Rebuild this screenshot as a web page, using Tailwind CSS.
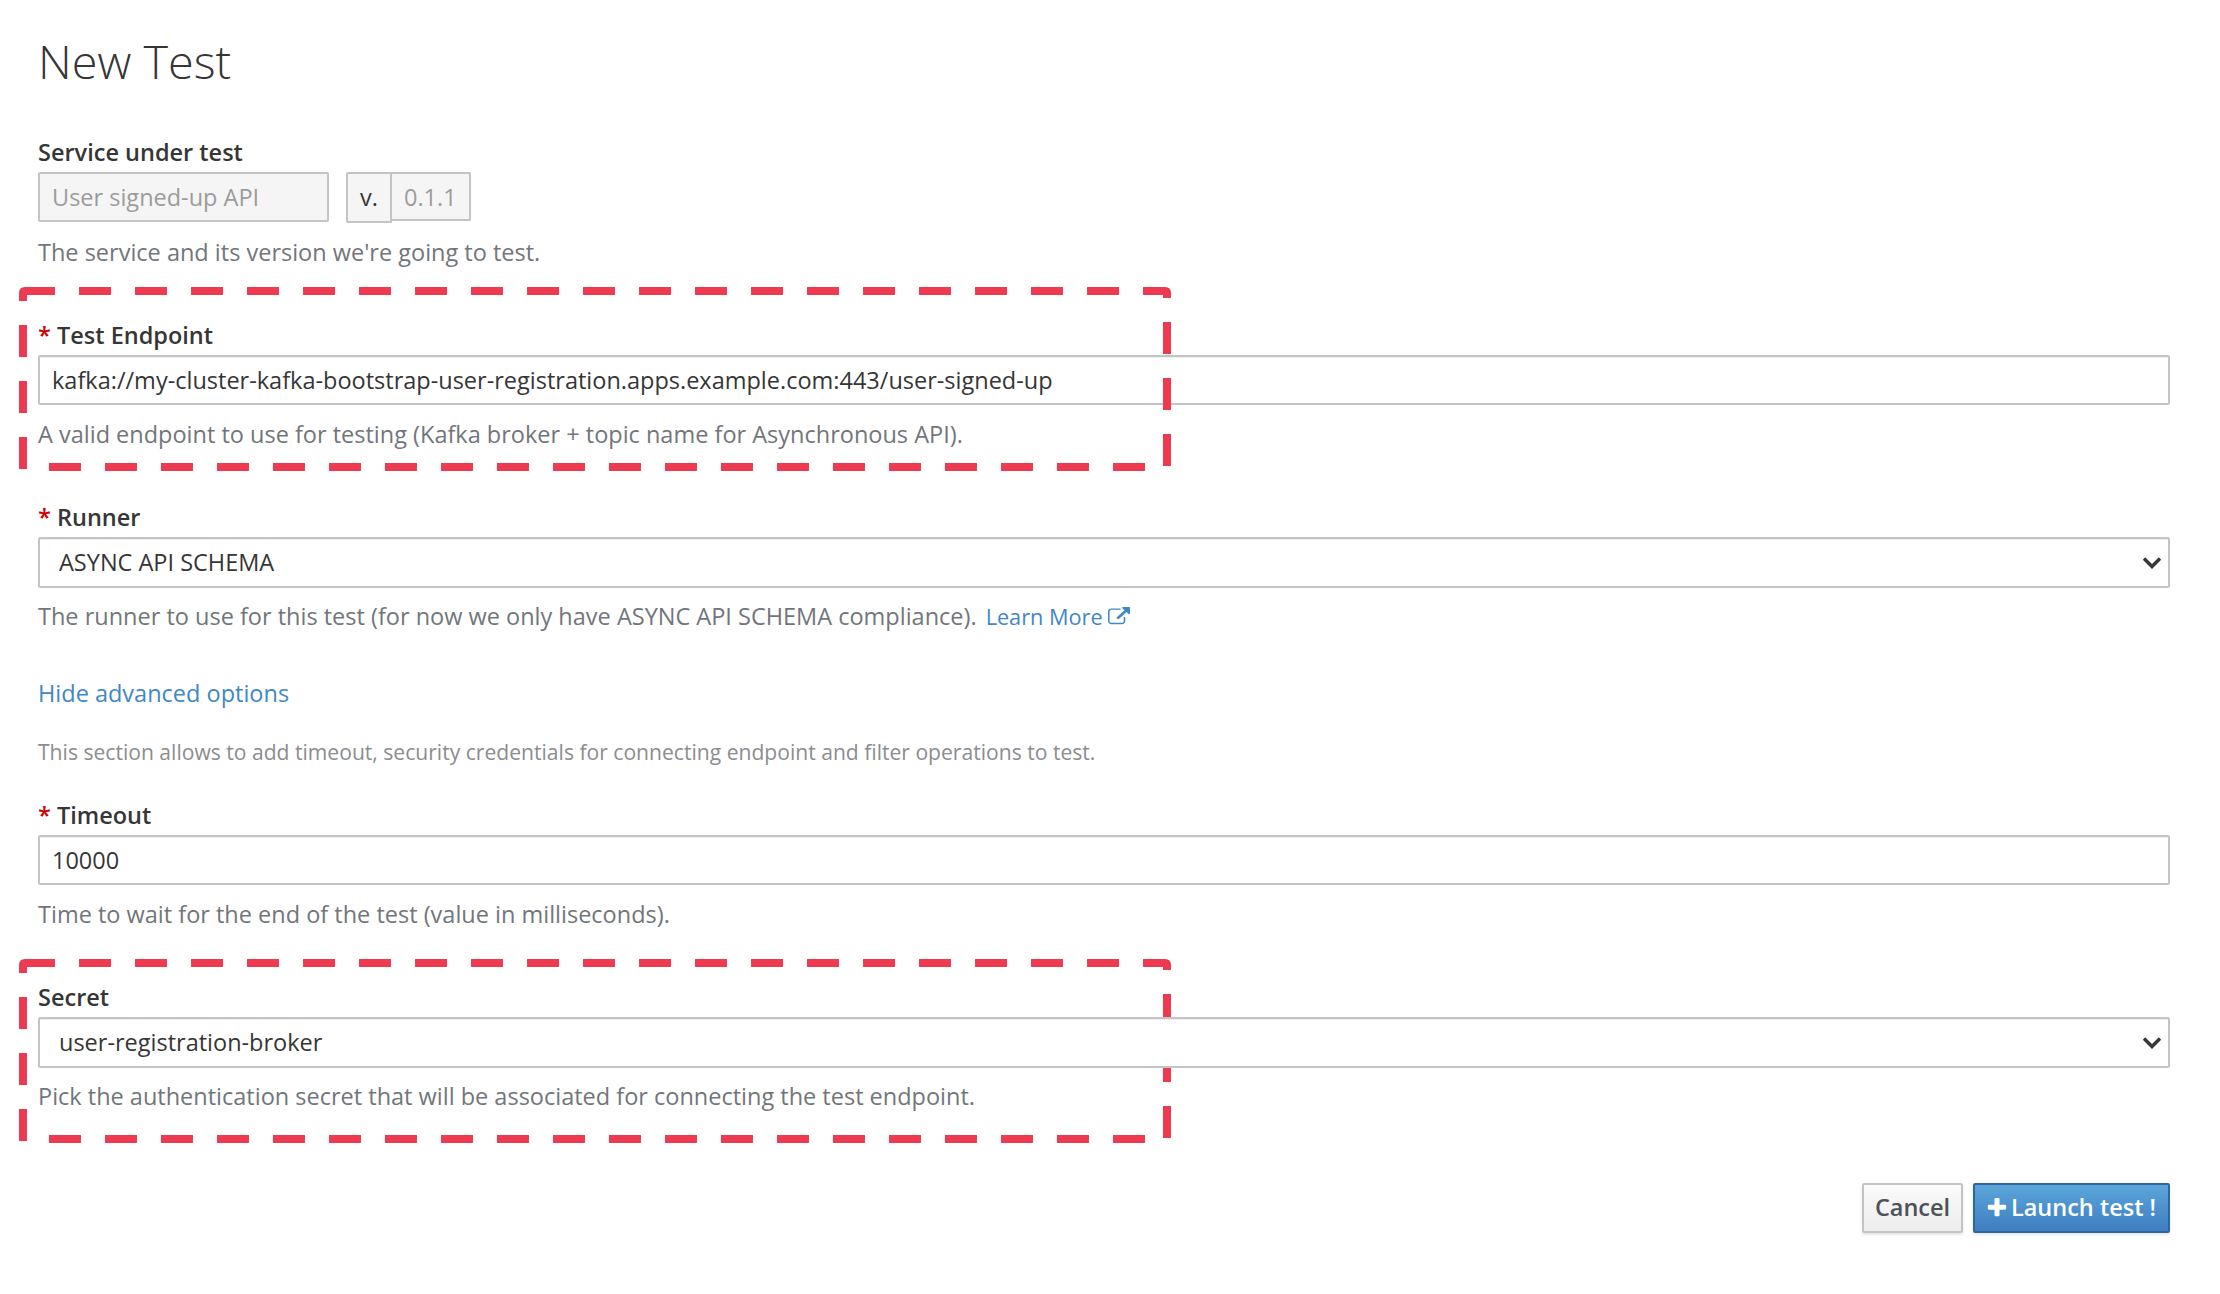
<!DOCTYPE html>
<html lang="en">
<head>
    <meta charset="UTF-8">
    <title>New Test</title>
    <script src="https://cdn.jsdelivr.net/npm/@tailwindcss/browser@4"></script>
</head>
<body class="bg-white font-['Open_Sans',sans-serif] text-[#363636] text-[23.5px]">
    <form class="pl-[38px] pr-[50px] pb-[62px]">
        <h1 class="mt-[31px] h-[60px] leading-[60px] text-[46.8px] font-light">New Test</h1>

        <!-- service -->
        <div class="mt-[46px]">
            <label class="block h-[30px] leading-[30px] mb-[5px] font-semibold">Service under test</label>
            <div class="flex">
                <input disabled value="User signed-up API" class="w-[291px] h-[50px] px-[12px] border-2 border-[#c4c4c4] rounded-[2px] bg-[#f5f5f5] text-[#9c9c9c]">
                <span class="ml-[17px] w-[46px] h-[51px] flex items-center justify-center border-2 border-[#c4c4c4] rounded-l-[2px] bg-[#f5f5f5] text-[#363636]">v.</span>
                <input disabled value="0.1.1" class="w-[79px] h-[49px] px-[12px] border-2 border-l-0 border-[#c4c4c4] rounded-r-[2px] bg-[#f5f5f5] text-[#9c9c9c]">
            </div>
            <p class="mt-[14px] h-[30px] leading-[30px] text-[#72767b]">The service and its version we're going to test.</p>
        </div>

        <!-- endpoint -->
        <div class="relative mt-[53px]">
            <svg class="absolute top-[-33px] left-[-19px] pointer-events-none" width="1152" height="184" fill="none" stroke="#ee3a50" stroke-width="8">
                <path d="M4 14V6Q4 4 6 4H36"/>
                <path d="M60 4H1124" stroke-dasharray="32 24"/>
                <path d="M1124 4H1146Q1148 4 1148 6V11"/>
                <path d="M4 38V182" stroke-dasharray="32 24"/>
                <path d="M1148 35V179" stroke-dasharray="32 24"/>
                <path d="M30 180H1126" stroke-dasharray="32 24"/>
            </svg>
            <label class="block h-[30px] leading-[30px] mb-[5px] font-semibold"><span class="text-[#cc0000]">*</span> Test Endpoint</label>
            <input value="kafka://my-cluster-kafka-bootstrap-user-registration.apps.example.com:443/user-signed-up" class="block w-full h-[50px] px-[12px] border-2 border-[#c4c4c4] rounded-[2px] shadow-[inset_0_1px_1px_rgba(0,0,0,0.075)]">
            <p class="mt-[14px] h-[30px] leading-[30px] text-[#72767b]">A valid endpoint to use for testing (Kafka broker + topic name for Asynchronous API).</p>
        </div>

        <!-- runner -->
        <div class="relative mt-[53px]">
            <label class="block h-[30px] leading-[30px] mb-[5px] font-semibold"><span class="text-[#cc0000]">*</span> Runner</label>
            <div class="relative">
                <select class="block w-full h-[51px] px-[19px] appearance-none border-2 border-[#c4c4c4] rounded-[2px] bg-white shadow-[inset_0_1px_1px_rgba(0,0,0,0.075)]">
                    <option>ASYNC API SCHEMA</option>
                </select>
                <svg class="absolute right-[8px] top-[19px]" width="20" height="14" viewBox="0 0 20 14" fill="none" stroke="#363636" stroke-width="3.4"><path d="M2 2.5l8 8 8-8"/></svg>
            </div>
            <p class="mt-[13px] h-[30px] leading-[30px] text-[#72767b] flex items-center">The runner to use for this test (for now we only have ASYNC API SCHEMA compliance).
                <a href="#" class="ml-[9px] mt-[2px] text-[21.7px] text-[#3f88c5] flex items-center">Learn More
                    <svg class="ml-[5px]" width="22" height="20" viewBox="0 0 1792 1792" fill="#3f88c5" preserveAspectRatio="none"><path d="M1408 928v320q0 119-84.5 203.5t-203.5 84.5h-832q-119 0-203.5-84.5t-84.5-203.5v-832q0-119 84.5-203.5t203.5-84.5h704q14 0 23 9t9 23v64q0 14-9 23t-23 9h-704q-66 0-113 47t-47 113v832q0 66 47 113t113 47h832q66 0 113-47t47-113v-320q0-14 9-23t23-9h64q14 0 23 9t9 23zm384-864v512q0 26-19 45t-45 19-45-19l-176-176-652 652q-10 10-23 10t-23-10l-114-114q-10-10-10-23t10-23l652-652-176-176q-19-19-19-45t19-45 45-19h512q26 0 45 19t19 45z"/></svg>
                </a>
            </p>
        </div>

        <!-- advanced -->
        <a href="#" class="block mt-[47px] h-[30px] leading-[30px] text-[#3f88c5]">Hide advanced options</a>
        <p class="mt-[29px] h-[30px] leading-[30px] text-[21.1px] text-[#8b8d8f]">This section allows to add timeout, security credentials for connecting endpoint and filter operations to test.</p>

        <div class="mt-[33px]">
            <label class="block h-[30px] leading-[30px] mb-[5px] font-semibold"><span class="text-[#cc0000]">*</span> Timeout</label>
            <input value="10000" class="block w-full h-[50px] px-[12px] border-2 border-[#c4c4c4] rounded-[2px] shadow-[inset_0_1px_1px_rgba(0,0,0,0.075)]">
            <p class="mt-[14px] h-[30px] leading-[30px] text-[#72767b]">Time to wait for the end of the test (value in milliseconds).</p>
        </div>

        <!-- secret -->
        <div class="relative mt-[53px]">
            <svg class="absolute top-[-23px] left-[-19px] pointer-events-none" width="1152" height="184" fill="none" stroke="#ee3a50" stroke-width="8">
                <path d="M4 14V6Q4 4 6 4H36"/>
                <path d="M60 4H1124" stroke-dasharray="32 24"/>
                <path d="M1124 4H1146Q1148 4 1148 6V11"/>
                <path d="M4 38V182" stroke-dasharray="32 24"/>
                <path d="M1148 35V179" stroke-dasharray="32 24"/>
                <path d="M30 180H1126" stroke-dasharray="32 24"/>
            </svg>
            <label class="block h-[30px] leading-[30px] mb-[5px] font-semibold">Secret</label>
            <div class="relative">
                <select class="block w-full h-[51px] px-[19px] appearance-none border-2 border-[#c4c4c4] rounded-[2px] bg-white shadow-[inset_0_1px_1px_rgba(0,0,0,0.075)]">
                    <option>user-registration-broker</option>
                </select>
                <svg class="absolute right-[8px] top-[19px]" width="20" height="14" viewBox="0 0 20 14" fill="none" stroke="#363636" stroke-width="3.4"><path d="M2 2.5l8 8 8-8"/></svg>
            </div>
            <p class="mt-[13px] h-[30px] leading-[30px] text-[#72767b]">Pick the authentication secret that will be associated for connecting the test endpoint.</p>
        </div>

        <div class="mt-[72px] flex justify-end gap-[10px]">
            <button type="button" class="w-[101px] h-[50px] border-2 border-[#c4c4c4] rounded-[2px] bg-gradient-to-b from-[#fafafa] to-[#ededed] text-[#4d5258] font-semibold shadow-[0_2px_3px_rgba(0,0,0,0.1)]">Cancel</button>
            <button type="button" class="w-[197px] h-[50px] flex items-center justify-center border-2 border-[#2f669f] rounded-[2px] bg-gradient-to-b from-[#5aa6da] to-[#3f7ec0] text-white font-semibold shadow-[0_2px_3px_rgba(0,0,0,0.1)]">
                <svg class="mr-[4px]" width="20" height="20" viewBox="128 128 1536 1536" fill="#ffffff"><path d="M1600 736v192q0 40-28 68t-68 28h-416v416q0 40-28 68t-68 28h-192q-40 0-68-28t-28-68v-416h-416q-40 0-68-28t-28-68v-192q0-40 28-68t68-28h416v-416q0-40 28-68t68-28h192q40 0 68 28t28 68v416h416q40 0 68 28t28 68z"/></svg>
                Launch test !
            </button>
        </div>
    </form>
</body>
</html>
